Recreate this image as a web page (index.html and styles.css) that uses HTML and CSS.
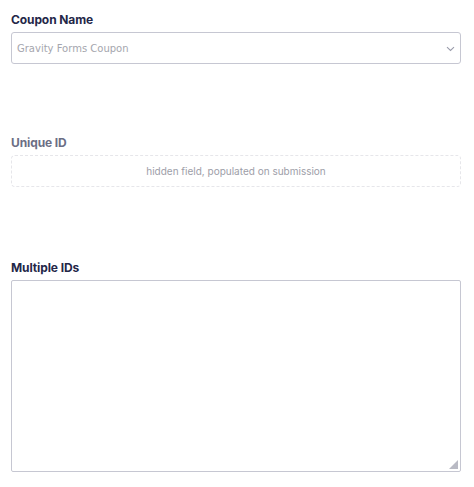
FILE: index.html
```html
<!DOCTYPE html>
<html>
<head>
<meta charset="utf-8">
<link rel="stylesheet" href="styles.css">
</head>
<body>
<form class="form">
  <div class="field">
    <label class="label">Coupon Name</label>
    <div class="select">
      <span class="select-text">Gravity Forms Coupon</span>
      <svg class="chev" width="9" height="6" viewBox="0 0 9 6"><path d="M1 1.2 L4.5 4.5 L8 1.2" fill="none" stroke="#9a9cab" stroke-width="1.1"/></svg>
    </div>
  </div>
  <div class="field field-hidden">
    <label class="label label-muted">Unique ID</label>
    <div class="hidden-box">hidden field, populated on submission</div>
  </div>
  <div class="field field-ta">
    <label class="label">Multiple IDs</label>
    <div class="textarea">
      <svg class="grip" width="9" height="9" viewBox="0 0 9 9"><path d="M9 0 L9 9 L0 9 Z" fill="#b9bac4"/></svg>
    </div>
  </div>
</form>
</body>
</html>
```
FILE: styles.css
```css
html, body { margin: 0; padding: 0; background: #fff; }
body { font-family: Inter, "Noto Sans", sans-serif; }
.form { padding: 12px 13px 0 11px; display: flex; flex-direction: column; }
.field { display: flex; flex-direction: column; }
.label { font-size: 12px; font-weight: 700; color: #242748; line-height: 15px; margin-bottom: 5px; letter-spacing: -0.1px; }
.label-muted { color: #6c6e85; }
.select { height: 30px; border: 1px solid #c6c7d2; border-radius: 3px; display: flex; align-items: center; justify-content: space-between; padding: 0 5px 0 5px; }
.select-text { font-family: "DejaVu Sans", sans-serif; font-size: 10px; color: #a5a6ae; }
.chev { margin-top: 2px; }
.field-hidden { margin-top: 71px; }
.hidden-box { height: 30px; border: 1px dashed #e6e6ea; border-radius: 4px; display: flex; align-items: center; justify-content: center; font-size: 10px; color: #9d9ea8; }
.field-ta { margin-top: 73px; }
.textarea { height: 190px; border: 1px solid #c6c7d2; border-radius: 2px; position: relative; }
.grip { position: absolute; right: 2px; bottom: 2px; }
```
